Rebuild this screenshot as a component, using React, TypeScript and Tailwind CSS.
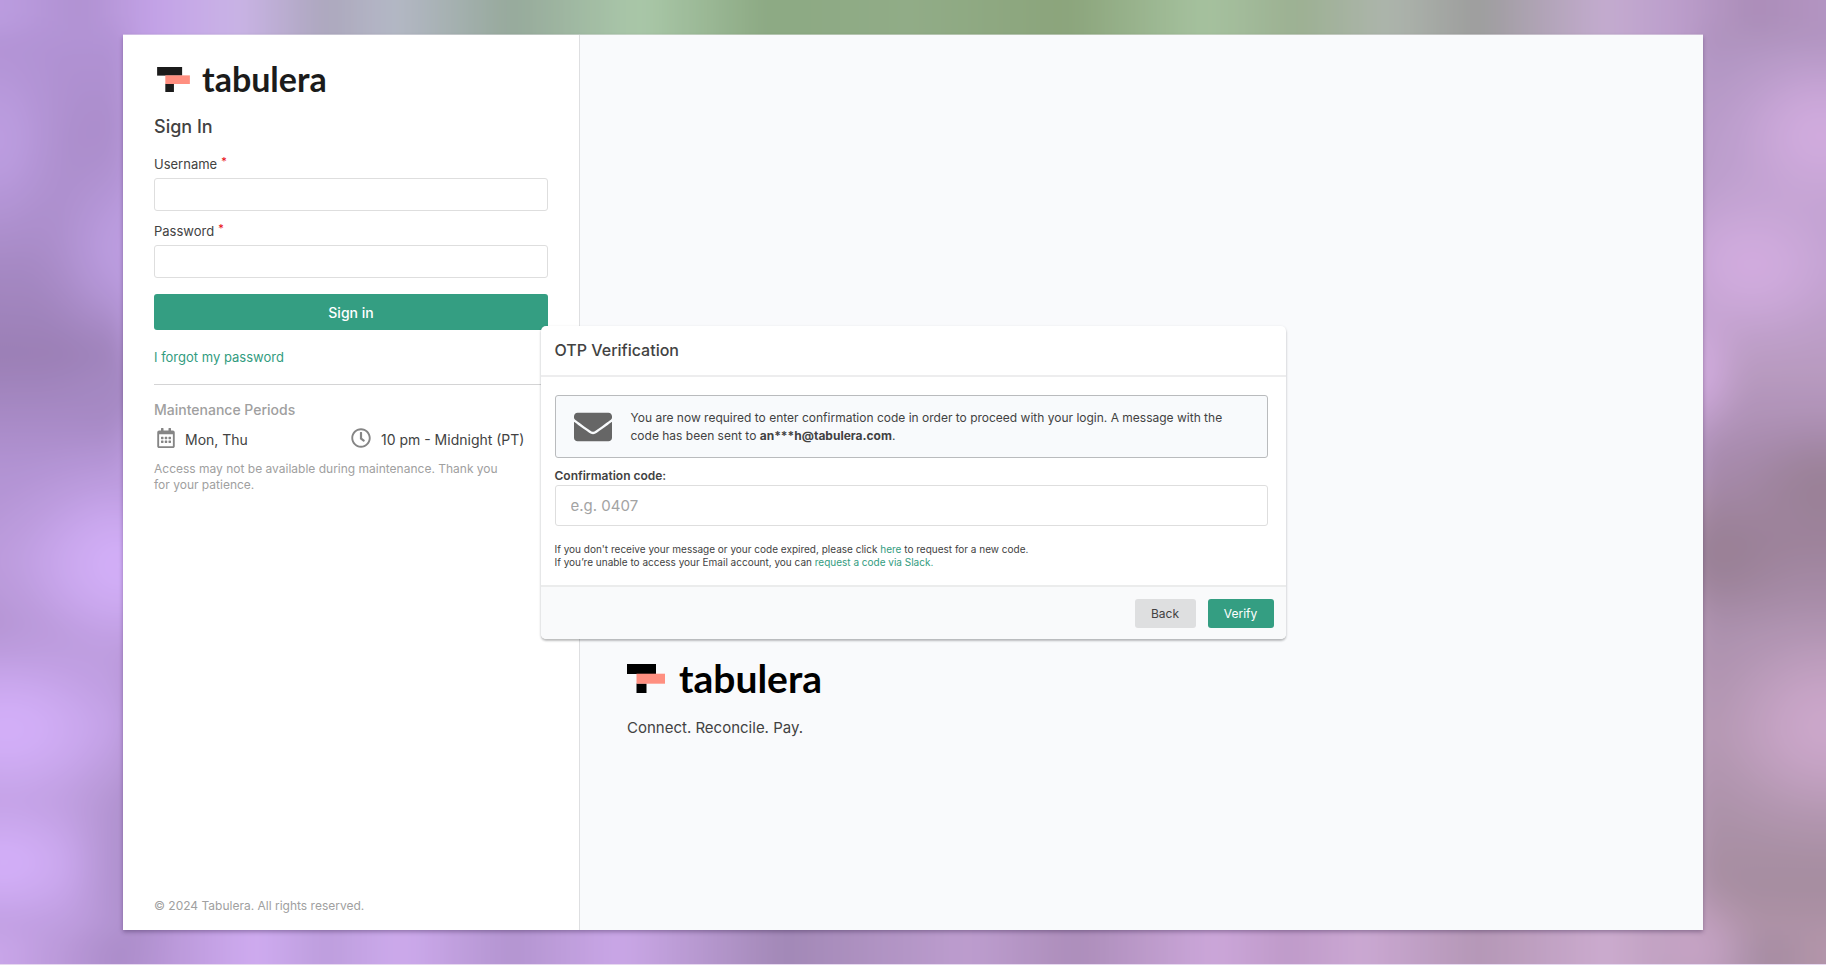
import type { ReactNode } from 'react';
import { FaEnvelope, FaRegCalendarAlt, FaRegClock } from 'react-icons/fa';

type Stop = [offset: number, color: string];

const topStops: Stop[] = [
  [0, '#bb9ce0'], [0.045, '#b091d1'], [0.085, '#c3a2e7'], [0.13, '#cab3e6'], [0.178, '#aca7bd'],
  [0.215, '#b4b8c6'], [0.28, '#96a99b'], [0.35, '#aac8a9'], [0.42, '#8ca983'], [0.5, '#91ac87'],
  [0.585, '#8ba47b'], [0.66, '#a6c29f'], [0.71, '#9cb092'], [0.76, '#adb5ac'], [0.81, '#9d9d9d'],
  [0.88, '#c4abd0'], [0.92, '#bb9dcb'], [0.96, '#ab8db8'], [1, '#b394c2'],
];

const bottomStops: Stop[] = [
  [0, '#c9a6e9'], [0.065, '#ad8dcb'], [0.14, '#cfabf0'], [0.178, '#bd9edd'], [0.22, '#cdaaec'],
  [0.28, '#b394d0'], [0.34, '#caa7e7'], [0.43, '#a288b6'], [0.53, '#bd9dcf'], [0.59, '#ac8dba'],
  [0.665, '#cca7da'], [0.705, '#bf9ac9'], [0.745, '#cba8d3'], [0.81, '#b497b6'], [0.88, '#ccabcf'],
  [0.97, '#a68ca2'], [1, '#b496aa'],
];

const leftStops: Stop[] = [
  [0, '#bd9fe2'], [0.04, '#b192d4'], [0.14, '#ab8dcb'], [0.25, '#a88bc7'], [0.37, '#9b7fb5'],
  [0.48, '#b192d2'], [0.58, '#ba9ada'], [0.65, '#b494d3'], [0.75, '#c09fe2'], [0.83, '#b999d8'],
  [0.9, '#bd9cdd'], [1, '#bb9adb'],
];

const rightStops: Stop[] = [
  [0, '#a98db5'], [0.06, '#b296c3'], [0.13, '#b89bc9'], [0.2, '#bd9fcd'], [0.27, '#c0a1d0'],
  [0.38, '#b99bc1'], [0.46, '#aa8db1'], [0.56, '#9e839c'], [0.66, '#ac91ae'], [0.76, '#b296b0'],
  [0.84, '#ac92a9'], [0.92, '#a68da0'], [1, '#b697ad'],
];

function Gradient({ id, stops, vertical }: { id: string; stops: Stop[]; vertical?: boolean }) {
  return (
    <linearGradient
      id={id}
      gradientUnits="userSpaceOnUse"
      x1="0"
      y1="0"
      x2={vertical ? 0 : 1826}
      y2={vertical ? 965 : 0}
    >
      {stops.map(([offset, color]) => (
        <stop key={offset} offset={offset} stopColor={color} />
      ))}
    </linearGradient>
  );
}

function Glow({ id, color }: { id: string; color: string }) {
  return (
    <radialGradient id={id}>
      <stop offset="0" stopColor={color} stopOpacity="1" />
      <stop offset="0.3" stopColor={color} stopOpacity="0.75" />
      <stop offset="0.7" stopColor={color} stopOpacity="0.2" />
      <stop offset="1" stopColor={color} stopOpacity="0" />
    </radialGradient>
  );
}

function Wallpaper() {
  return (
    <svg
      aria-hidden="true"
      className="absolute inset-0 h-full w-full"
      viewBox="0 0 1826 965"
      preserveAspectRatio="none"
    >
      <defs>
        <Gradient id="top" stops={topStops} />
        <Gradient id="bottom" stops={bottomStops} />
        <Gradient id="left" stops={leftStops} vertical />
        <Gradient id="right" stops={rightStops} vertical />
        <Glow id="lilac" color="#d4b0fa" />
        <Glow id="violet" color="#bd9ee2" />
        <Glow id="shade" color="#a589c3" />
        <Glow id="pink" color="#d2acdf" />
        <Glow id="rose" color="#cda8cc" />
        <Glow id="mauve" color="#998095" />
        <filter id="soft" filterUnits="userSpaceOnUse" x="-60" y="-60" width="1946" height="1085">
          <feGaussianBlur stdDeviation="12" />
        </filter>
      </defs>
      <g filter="url(#soft)">
        <rect x="-60" y="-60" width="1946" height="542" fill="url(#top)" />
        <rect x="-60" y="482" width="1946" height="543" fill="url(#bottom)" />
        <rect x="-60" y="30" width="186" height="905" fill="url(#left)" />
        <rect x="1700" y="30" width="186" height="905" fill="url(#right)" />
        <ellipse cx="-5" cy="141" rx="90" ry="130" fill="url(#violet)" />
        <ellipse cx="128" cy="250" rx="100" ry="130" fill="url(#violet)" />
        <ellipse cx="123" cy="390" rx="90" ry="50" fill="url(#shade)" />
        <ellipse cx="125" cy="566" rx="150" ry="130" fill="url(#lilac)" />
        <ellipse cx="8" cy="730" rx="150" ry="110" fill="url(#lilac)" />
        <ellipse cx="4" cy="862" rx="140" ry="90" fill="url(#lilac)" />
        <ellipse cx="123" cy="870" rx="60" ry="150" fill="url(#shade)" opacity="0.6" />
        <ellipse cx="1820" cy="135" rx="120" ry="110" fill="url(#pink)" />
        <ellipse cx="1752" cy="265" rx="120" ry="100" fill="url(#pink)" />
        <ellipse cx="1700" cy="370" rx="50" ry="90" fill="url(#pink)" />
        <ellipse cx="1826" cy="490" rx="110" ry="80" fill="url(#mauve)" />
        <ellipse cx="1718" cy="555" rx="90" ry="70" fill="url(#mauve)" />
        <ellipse cx="1826" cy="726" rx="140" ry="130" fill="url(#rose)" />
        <ellipse cx="1700" cy="945" rx="60" ry="80" fill="url(#rose)" opacity="0.7" />
      </g>
      <rect y="964" width="1826" height="1" fill="#e6d8ef" />
    </svg>
  );
}

function LogoMark({ className, ink }: { className: string; ink: string }) {
  return (
    <svg viewBox="0 0 38 29" className={className} aria-hidden="true">
      <path d="M0 0h29v10H0z" fill={ink} />
      <path d="M9.500 19.500h10V29h-10z" fill={ink} />
      <path d="M9.500 9.700H38v10H9.500z" fill="#ff8f80" />
    </svg>
  );
}

function Link({ children }: { children: ReactNode }) {
  return (
    <a href="#" className="text-[#329c80]">
      {children}
    </a>
  );
}

function Field({ id, label, type }: { id: string; label: string; type: string }) {
  return (
    <div className="flex flex-col gap-[6px]">
      <label htmlFor={id} className="flex gap-1 text-[13px] leading-4">
        {label}
        <span className="text-[11px] leading-[10px] text-red-600">*</span>
      </label>
      <input id={id} type={type} className="h-[33px] rounded-[3px] border border-[#dedede] bg-white px-3 outline-none" />
    </div>
  );
}

function SignInPanel() {
  return (
    <section className="flex w-[457px] shrink-0 flex-col border-r border-[#dedfe1] bg-white px-[31px] pt-[26px] pb-4">
      <div className="flex h-9 items-center gap-3 pl-[3px]">
        <LogoMark className="h-[25px] w-[33px]" ink="#1b1b1b" />
        <span className="font-[Lato,sans-serif] text-[34px] leading-9 font-bold text-[#1b1b1b]">tabulera</span>
      </div>
      <h1 className="mt-[18px] text-[18px] leading-6 font-medium">Sign In</h1>
      <form className="mt-[17px] flex flex-col" onSubmit={(e) => e.preventDefault()}>
        <div className="flex flex-col gap-3">
          <Field id="username" label="Username" type="text" />
          <Field id="password" label="Password" type="password" />
        </div>
        <button type="submit" className="mt-4 h-9 rounded-[3px] bg-[#349e82] text-[14px] font-medium text-white">
          Sign in
        </button>
      </form>
      <p className="mt-[18px] text-[13px] leading-[18px]">
        <Link>I forgot my password</Link>
      </p>
      <hr className="mt-[18px] border-[#d4d4d5]" />
      <h2 className="mt-4 text-[14px] leading-[18px] font-medium text-[#a0a0a0]">Maintenance Periods</h2>
      <div className="mt-[9px] grid grid-cols-2 text-[14px] leading-6">
        <span className="flex items-center gap-[10px] pl-[3px]">
          <FaRegCalendarAlt className="mb-1 h-5 w-[18px] text-[#858585]" />
          Mon, Thu
        </span>
        <span className="flex items-center gap-[10px]">
          <FaRegClock className="mb-1 h-5 w-5 text-[#858585]" />
          10 pm - Midnight (PT)
        </span>
      </div>
      <p className="mt-[9px] pr-9 text-[12px] leading-4 text-[#a0a0a0]">
        Access may not be available during maintenance. Thank you for your patience.
      </p>
      <footer className="mt-auto text-[12px] leading-4 text-[#a0a0a0]">© 2024 Tabulera. All rights reserved.</footer>
    </section>
  );
}

function BrandPanel() {
  return (
    <section className="flex grow flex-col justify-end bg-[#f9fafc] pb-[190px] pl-[47px]">
      <div className="flex h-11 items-center gap-[14px]">
        <LogoMark className="h-[29px] w-[38px]" ink="#000000" />
        <span className="font-[Lato,sans-serif] text-[39px] leading-[44px] font-bold text-black">tabulera</span>
      </div>
      <p className="mt-4 text-[15px] leading-6">Connect. Reconcile. Pay.</p>
    </section>
  );
}

function OtpDialog() {
  return (
    <div
      role="dialog"
      aria-labelledby="otp-title"
      className="w-[745px] overflow-hidden rounded-[5px] bg-white shadow-[0_2px_2px_0_rgba(34,36,38,0.22),0_1px_3px_0_rgba(34,36,38,0.15)]"
    >
      <h2 id="otp-title" className="border-b-2 border-[#ededee] py-3 pl-[14px] text-[16px] leading-[25px] font-medium">
        OTP Verification
      </h2>
      <div className="pt-[18px] pr-[18px] pb-4 pl-[14px]">
        <div className="flex h-[63px] items-center gap-[19px] rounded-[3px] border border-[#b9bbbd] bg-[#f8fafc] pl-[18px]">
          <FaEnvelope className="h-[38px] w-[38px] shrink-0 text-[#666666]" />
          <p className="text-[12px] leading-[18px]">
            You are now required to enter confirmation code in order to proceed with your login. A message with the
            <br />
            code has been sent to <b className="font-bold">an***h@tabulera.com</b>.
          </p>
        </div>
        <label htmlFor="otp-code" className="mt-[10px] block text-[12px] leading-4 font-semibold">
          Confirmation code:
        </label>
        <input
          id="otp-code"
          type="text"
          placeholder="e.g. 0407"
          className="mt-px block h-[41px] w-full rounded-[3px] border border-[#dedede] px-[15px] text-[15px] outline-none placeholder:text-[#a3a3a3]"
        />
        <p className="mt-[17px] text-[10px] leading-[13px]">
          If you don't receive your message or your code expired, please click <Link>here</Link> to request for a new
          code.
          <br />
          If you’re unable to access your Email account, you can <Link>request a code via Slack.</Link>
        </p>
      </div>
      <div className="flex justify-end gap-3 border-t-2 border-[#ebecec] bg-[#f9fafb] px-3 pt-3 pb-[11px] text-[12px]">
        <button type="button" className="h-[29px] w-[61px] rounded-[3px] bg-[#dedfe0]">
          Back
        </button>
        <button type="button" className="h-[29px] w-[66px] rounded-[3px] bg-[#349e82] text-white">
          Verify
        </button>
      </div>
    </div>
  );
}

export default function App() {
  return (
    <div className="relative flex min-h-screen flex-col px-[123px] py-[35px] font-[Inter,sans-serif] text-[#424242]">
      <Wallpaper />
      <main className="relative flex grow shadow-[0_2px_4px_rgba(40,20,60,0.35),0_-1px_0_rgba(255,255,255,0.4)]">
        <SignInPanel />
        <BrandPanel />
      </main>
      <div className="absolute inset-0 flex items-center justify-center">
        <OtpDialog />
      </div>
    </div>
  );
}
